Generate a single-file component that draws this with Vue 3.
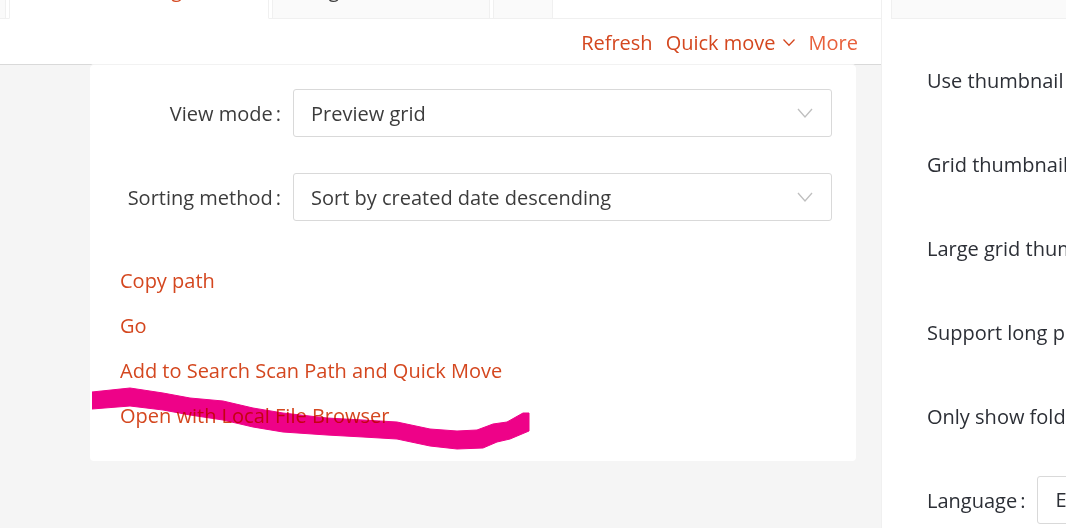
<template>
  <div class="page">
    <div class="left-pane">
      <div class="tabs">
        <div class="tab tab-stub"></div>
        <div class="tab tab-active"><span>Browsing</span></div>
        <div class="tab tab-second"><span>Image search tools</span></div>
        <div class="tab tab-third"></div>
      </div>
      <div class="actions">
        <a class="link">Refresh</a>
        <a class="link quick-move">
          Quick move
          <svg class="caret" viewBox="0 0 14 9" width="14" height="9">
            <path d="M1.5 1.5 7 7.2l5.5-5.7" fill="none" stroke="currentColor" stroke-width="1.3" />
          </svg>
        </a>
        <a class="link more">More</a>
      </div>
      <div class="content">
        <div class="card">
          <div v-for="row in selects" :key="row.label" class="form-row">
            <label class="form-label">{{ row.label }}<i>:</i></label>
            <div class="select">
              <span>{{ row.value }}</span>
              <svg class="select-arrow" viewBox="0 0 16 10" width="16" height="10">
                <path d="M1 1l7 8 7-8" fill="none" stroke="currentColor" stroke-width="1.3" />
              </svg>
            </div>
          </div>
          <div class="card-links">
            <a v-for="item in cardLinks" :key="item" class="link">{{ item }}</a>
          </div>
        </div>
      </div>
    </div>
    <div class="right-pane">
      <div class="right-tabs"><div class="right-tab"></div></div>
      <div class="settings">
        <div v-for="item in settings" :key="item" class="setting">{{ item }}</div>
        <div class="setting setting-lang">
          <label>Language<i>:</i></label>
          <div class="lang-select">English</div>
        </div>
      </div>
    </div>
    <svg class="marker" viewBox="0 0 440 66" width="440" height="66">
      <path
        d="M0 7 38 3 71 8 98 13 131 16 161 23 191 28 235 33 271 35 305 37 338 44 365 46 385 45 401 39 415 37 431 28 437 28 437 46 418 54 405 57 391 63 365 64 338 61 305 54 271 52 235 50 191 47 161 42 131 35 98 30 71 25 38 21 0 24Z"
        fill="#ee0288"
        stroke="#ee0288"
        stroke-width="1"
        stroke-linejoin="round"
      />
    </svg>
  </div>
</template>

<script setup>
const selects = [
  { label: 'View mode', value: 'Preview grid' },
  { label: 'Sorting method', value: 'Sort by created date descending' },
]

const cardLinks = [
  'Copy path',
  'Go',
  'Add to Search Scan Path and Quick Move',
  'Open with Local File Browser',
]

const settings = [
  'Use thumbnail instead of original',
  'Grid thumbnail size setting',
  'Large grid thumbnail size setting',
  'Support long press preview',
  'Only show folders with images',
]
</script>

<style>
html,
body {
  margin: 0;
  overflow: hidden;
}
</style>

<style scoped>
.page {
  position: relative;
  display: flex;
  width: 1066px;
  height: 528px;
  overflow: hidden;
  background: #fff;
  font-family: 'Open Sans', 'Noto Sans', sans-serif;
  font-size: 20px;
  color: #3c3c3c;
}

.left-pane {
  display: flex;
  flex-direction: column;
  width: 882px;
  flex-shrink: 0;
  box-sizing: border-box;
  border-right: 1px solid #f0f0f0;
  background: #f5f5f5;
}

.tabs {
  display: flex;
  gap: 3px;
  height: 19px;
  box-sizing: border-box;
  border-bottom: 1px solid #f0f0f0;
  background: #fff;
}

.tab {
  display: flex;
  align-items: flex-end;
  justify-content: center;
  height: 19px;
  box-sizing: border-box;
  padding-bottom: 15px;
  border: 1px solid #f0f0f0;
  border-top: 0;
  background: #fafafa;
  line-height: 26px;
  white-space: nowrap;
}

.tab-stub {
  width: 6px;
  border-left: 0;
}

.tab-active {
  width: 260px;
  border-bottom-color: #fff;
  background: #fff;
  color: #d4471f;
}

.tab-second {
  width: 218px;
}

.tab-third {
  width: 60px;
}

.actions {
  display: flex;
  align-items: center;
  justify-content: flex-end;
  gap: 13px;
  height: 46px;
  box-sizing: border-box;
  padding: 2px 23px 0 0;
  border-bottom: 1px solid #d9d9d9;
  background: #fff;
}

.link {
  color: #d4471f;
}

.quick-move {
  display: flex;
  align-items: center;
  gap: 6px;
}

.more {
  color: #e8603c;
}

.content {
  flex: 1;
  padding: 0 25px 0 90px;
}

.card {
  position: relative;
  height: 397px;
  box-sizing: border-box;
  margin-top: -1px;
  padding: 24px 24px 0 30px;
  border-top: 1px solid #f2f2f2;
  border-radius: 4px;
  background: #fff;
}

.form-row {
  display: flex;
  align-items: center;
  height: 48px;
  margin-bottom: 36px;
}

.form-label {
  display: flex;
  justify-content: flex-end;
  width: 161px;
  margin-right: 12px;
  white-space: nowrap;
}

.form-label i,
.setting-lang i {
  font-style: normal;
  margin-left: 3px;
}

.select {
  display: flex;
  align-items: center;
  justify-content: space-between;
  flex: 1;
  height: 48px;
  box-sizing: border-box;
  padding: 0 18px 0 17px;
  border: 1px solid #d9d9d9;
  border-radius: 3px;
}

.select-arrow {
  color: #bfbfbf;
}

.card-links {
  display: flex;
  flex-direction: column;
  gap: 19px;
  margin-top: 47px;
  line-height: 26px;
}

.right-pane {
  flex: 1;
  min-width: 0;
}

.right-tabs {
  height: 19px;
  padding-left: 9px;
}

.right-tab {
  height: 19px;
  box-sizing: border-box;
  border: 1px solid #f0f0f0;
  border-top: 0;
  border-right: 0;
  background: #fafafa;
}

.settings {
  display: flex;
  flex-direction: column;
  padding: 37px 0 0 45px;
  white-space: nowrap;
  color: #2c2f36;
}

.setting {
  display: flex;
  align-items: center;
  height: 48px;
  margin-bottom: 36px;
}

.setting-lang label {
  margin-right: 12px;
}

.lang-select {
  height: 48px;
  width: 200px;
  box-sizing: border-box;
  padding: 0 17px;
  border: 1px solid #d9d9d9;
  border-radius: 3px;
  line-height: 46px;
}

.marker {
  position: absolute;
  left: 92px;
  top: 385px;
  mix-blend-mode: multiply;
}
</style>
